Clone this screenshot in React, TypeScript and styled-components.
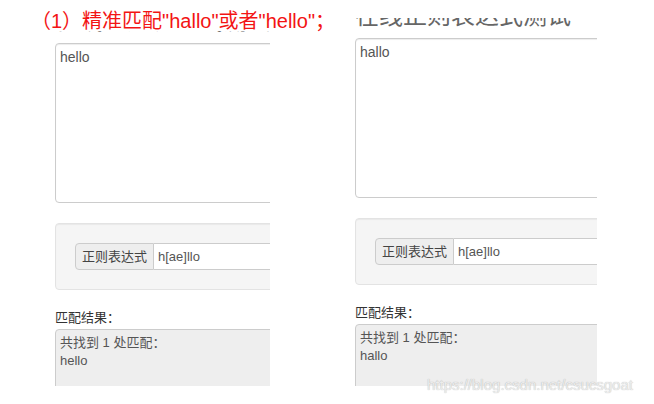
import React from 'react';
import styled, { createGlobalStyle } from 'styled-components';

const GlobalStyle = createGlobalStyle`
  html, body {
    margin: 0;
    padding: 0;
    background: #fff;
  }
  body {
    font-family: 'Liberation Sans', 'Noto Sans CJK SC', sans-serif;
  }
`;

const Page = styled.div`
  position: relative;
  width: 654px;
  height: 404px;
  overflow: hidden;
  display: flex;
  align-items: flex-start;
  background: #fff;
`;

const LeftColumn = styled.div`
  flex: none;
  width: 355px;
  padding-top: 11px;
`;

const RightColumn = styled.div`
  flex: none;
  padding-top: 18px;
`;

const Title = styled.div`
  padding-left: 31px;
  height: 20px;
  line-height: 20px;
  font-size: 20px;
  color: #f31414;
  white-space: nowrap;
`;

const Panel = styled.div<{ $width: number; $height: number; $left?: number }>`
  width: ${(p) => p.$width}px;
  height: ${(p) => p.$height}px;
  margin-left: ${(p) => p.$left ?? 0}px;
  overflow: hidden;
`;

const Heading = styled.div<{ $shift: number }>`
  margin: ${(p) => p.$shift}px 0 10px;
  font-size: 24px;
  line-height: 24px;
  color: #666;
  white-space: nowrap;
`;

const TextBox = styled.textarea`
  display: block;
  box-sizing: border-box;
  width: 520px;
  height: 160px;
  margin: 0;
  padding: 3px 4px 2px;
  border: 1px solid #ccc;
  border-radius: 4px;
  box-shadow: inset 0 1px 1px rgba(0, 0, 0, 0.075);
  font-family: inherit;
  font-size: 14px;
  line-height: 20px;
  color: #555;
  resize: none;
  outline: none;
`;

const Well = styled.div`
  box-sizing: border-box;
  width: 520px;
  margin-top: 20px;
  padding: 19px;
  background: #f5f5f5;
  border: 1px solid #e3e3e3;
  border-radius: 4px;
  box-shadow: inset 0 1px 1px rgba(0, 0, 0, 0.05);
`;

const InputGroup = styled.div`
  display: flex;
  height: 27px;
`;

const Addon = styled.span`
  box-sizing: border-box;
  padding: 0 6px;
  border: 1px solid #ccc;
  border-radius: 4px 0 0 4px;
  background: #eee;
  font-size: 13px;
  line-height: 25px;
  color: #444;
  white-space: nowrap;
`;

const RegexInput = styled.input`
  box-sizing: border-box;
  flex: 1;
  height: 27px;
  margin: 0;
  padding: 0 4px;
  border: 1px solid #ccc;
  border-left: 0;
  border-radius: 0 4px 4px 0;
  background: #fff;
  font-family: inherit;
  font-size: 13px;
  color: #555;
  outline: none;
`;

const ResultLabel = styled.div`
  margin-top: 19px;
  font-size: 13px;
  line-height: 18px;
  color: #333;
`;

const ResultBox = styled.div`
  box-sizing: border-box;
  width: 520px;
  height: 120px;
  margin-top: 2px;
  padding: 4px 4px;
  background: #eee;
  border: 1px solid #ccc;
  border-radius: 4px;
  font-size: 13px;
  line-height: 18px;
  color: #555;
`;

const Watermark = styled.div`
  position: absolute;
  left: 427px;
  top: 375px;
  font-size: 15px;
  line-height: 20px;
  color: #ececec;
  text-shadow: 0 0 1px rgba(0, 0, 0, 0.3);
  white-space: nowrap;
`;

type TesterProps = {
  width: number;
  height: number;
  left?: number;
  shift: number;
  text: string;
  match: string;
};

const Tester: React.FC<TesterProps> = ({ width, height, left, shift, text, match }) => (
  <Panel $width={width} $height={height} $left={left}>
    <Heading $shift={shift}>在线正则表达式测试</Heading>
    <TextBox readOnly defaultValue={text} />
    <Well>
      <InputGroup>
        <Addon>正则表达式</Addon>
        <RegexInput readOnly defaultValue='h[ae]llo' />
      </InputGroup>
    </Well>
    <ResultLabel>匹配结果：</ResultLabel>
    <ResultBox>
      <div>共找到 1 处匹配：</div>
      <div>{match}</div>
    </ResultBox>
  </Panel>
);

const App: React.FC = () => (
  <Page>
    <GlobalStyle />
    <LeftColumn>
      <Title>（1）精准匹配"hallo"或者"hello"；</Title>
      <Tester width={215} height={355} left={55} shift={-22} text='hello' match='hello' />
    </LeftColumn>
    <RightColumn>
      <Tester width={242} height={368} shift={-14} text='hallo' match='hallo' />
    </RightColumn>
    <Watermark>https://blog.csdn.net/csucsgoat</Watermark>
  </Page>
);

export default App;
